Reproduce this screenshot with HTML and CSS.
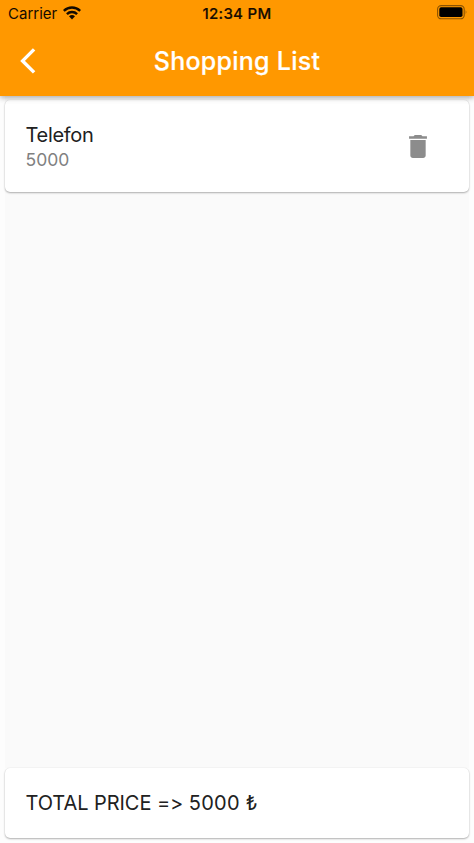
FILE: index.html
```html
<!DOCTYPE html>
<html lang="en">
<head>
<meta charset="utf-8">
<title>Shopping List</title>
<link rel="stylesheet" href="styles.css">
</head>
<body>
<header class="app-bar">
  <div class="status">
    <div class="carrier"><span class="carrier-name">Carrier</span>
      <svg class="wifi" viewBox="0 0 18 14"><g fill="none" stroke="#140b00" stroke-width="2.5"><path d="M.8 4.9C5.5.4 12.5.4 17.2 4.900"/><path d="M3.9 8.1C6.8 5.3 11.2 5.3 14.1 8.1"/></g><path fill="#140b00" d="M6 10.2q3-2.5 6 0L9 13.4z"/></svg>
    </div>
    <time class="clock">12:34 PM</time>
    <svg class="battery" viewBox="0 0 31 15"><rect x=".6" y=".6" width="26.6" height="13.2" rx="3.6" fill="none" stroke="#8c5300" stroke-width="1.1"/><rect x="2.3" y="2.3" width="23.2" height="9.8" rx="1.8"/><path fill="#8c5300" d="M28.7 5q1.6 2.2 0 4.4z"/></svg>
  </div>
  <div class="toolbar">
    <svg class="back" viewBox="0 0 16 26"><path d="M14.1 1.4 2.6 12.9 14.1 24.4" fill="none" stroke="#fff" stroke-width="3.4"/></svg>
    <h1 class="title">Shopping List</h1>
  </div>
</header>
<main class="list">
  <article class="card item">
    <div class="item-text"><div class="name">Telefon</div><div class="price">5000</div></div>
    <svg class="trash" viewBox="5 3 14 18"><path fill="#8c8c8c" d="M6 19c0 1.100.9 2 2 2h8c1.1 0 2-.9 2-2V7H6v12zM19 4h-3.500l-1-1h-5l-1 1H5v2h14V4z"/></svg>
  </article>
</main>
<footer class="card total"><span class="total-text">TOTAL PRICE =&gt; <span class="amount">5000 ₺</span></span></footer>
</body>
</html>
```
FILE: styles.css
```css
* { box-sizing: border-box; }
body {
  margin: 0;
  height: 843px;
  padding-bottom: 5px;
  display: flex;
  flex-direction: column;
  overflow: hidden;
  background: #fdfdfd;
  color: #212121;
  font-family: Inter, "Liberation Sans", sans-serif;
  font-variant-ligatures: none;
  font-feature-settings: "calt" 0;
}
.app-bar {
  height: 96px;
  flex: none;
  background: #ff9800;
  z-index: 1;
  box-shadow: 0 2px 5px rgba(0, 0, 0, .25), 0 1px 8px rgba(0, 0, 0, .08);
}
.status {
  height: 26px;
  padding: 0 6px 0 8px;
  display: grid;
  grid-template-columns: 1fr auto 1fr;
  align-items: center;
  color: #140b00;
}
.carrier { display: flex; align-items: center; gap: 6px; }
.carrier-name { font-size: 15px; letter-spacing: 0; }
.wifi { width: 18px; height: 14px; }
.clock { font-size: 15px; font-weight: 500; letter-spacing: .3px; padding-right: 2px; -webkit-text-stroke: .2px; }
.battery { width: 31px; height: 15px; justify-self: end; margin-bottom: 1px; }
.toolbar {
  height: 70px;
  padding: 0 20px;
  display: grid;
  grid-template-columns: 1fr auto 1fr;
  align-items: center;
}
.back { width: 16px; height: 26px; }
.title { margin: 0; color: #fff; font-size: 25px; line-height: 32px; font-weight: 500; letter-spacing: .25px; -webkit-text-stroke: .2px; }
.list { flex: 1; margin: 0 5px; padding: 4px 0; background: #fafafa; }
.card {
  background: #fff;
  border-radius: 5px;
  box-shadow: 0 1px 2px rgba(0, 0, 0, .3), 0 0 1px rgba(0, 0, 0, .12);
}
.item {
  height: 92px;
  padding: 0 42px 0 20.500px;
  display: flex;
  align-items: center;
  justify-content: space-between;
}
.item-text { padding-top: 2px; }
.name { font-size: 20px; line-height: 26px; letter-spacing: -.3px; }
.price { color: #808080; font-size: 17.500px; line-height: 24px; }
.trash { width: 18px; height: 23px; }
.total {
  height: 70px;
  margin: 0 5px;
  padding-left: 20.500px;
  display: flex;
  align-items: center;
  font-size: 20px;
  letter-spacing: -.07px;
}
.amount { letter-spacing: .25px; }
```
